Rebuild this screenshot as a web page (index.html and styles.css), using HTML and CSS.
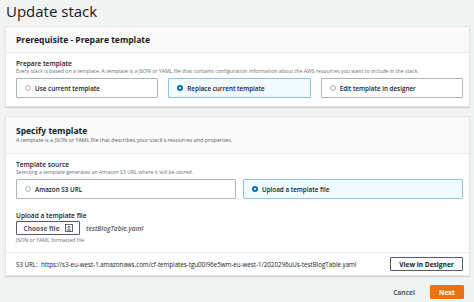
FILE: index.html
```html
<!DOCTYPE html>
<html lang="en">
<head>
    <meta charset="UTF-8">
    <title>Update stack</title>
    <link rel="stylesheet" href="styles.css">
</head>
<body>
    <h1 class="page-title">Update stack</h1>

    <div class="panel">
        <div class="panel-header">
            <h2>Prerequisite - Prepare template</h2>
        </div>
        <div class="panel-body">
            <div class="field-label">Prepare template</div>
            <div class="field-desc">Every stack is based on a template. A template is a JSON or YAML file that contains configuration information about the AWS resources you want to include in the stack.</div>
            <div class="tiles tiles-3">
                <div class="tile"><span class="radio"></span>Use current template</div>
                <div class="tile selected"><span class="radio"></span>Replace current template</div>
                <div class="tile"><span class="radio"></span>Edit template in designer</div>
            </div>
        </div>
    </div>

    <div class="panel">
        <div class="panel-header tall">
            <h2>Specify template</h2>
            <div class="header-desc">A template is a JSON or YAML file that describes your stack's resources and properties.</div>
        </div>
        <div class="panel-body">
            <div class="field-label">Template source</div>
            <div class="field-desc">Selecting a template generates an Amazon S3 URL where it will be stored.</div>
            <div class="tiles tiles-2">
                <div class="tile"><span class="radio"></span>Amazon S3 URL</div>
                <div class="tile selected"><span class="radio"></span>Upload a template file</div>
            </div>

            <div class="field-label upload-label">Upload a template file</div>
            <div class="file-row">
                <button class="btn file-btn">Choose file
                    <svg width="8" height="8" viewBox="0 0 8 8"><rect x="0.5" y="0.5" width="7" height="7" fill="none" stroke="#545b64" stroke-width="0.9"/><path d="M4 6V2M2.4 3.6L4 2l1.6 1.6M2 6.2h4" fill="none" stroke="#545b64" stroke-width="0.9"/></svg>
                </button>
                <span class="file-name">testBlogTable.yaml</span>
            </div>
            <div class="field-desc hint">JSON or YAML formatted file</div>
        </div>
        <div class="url-row">
            <span class="url-text">S3 URL:&nbsp; https://s3-eu-west-1.amazonaws.com/cf-templates-tgu00i96e5wm-eu-west-1/2020296uUs-testBlogTable.yaml</span>
            <button class="btn">View in Designer</button>
        </div>
    </div>

    <div class="actions">
        <button class="link-btn">Cancel</button>
        <button class="btn primary">Next</button>
    </div>
</body>
</html>
```

FILE: styles.css
```css
* {
    margin: 0;
    padding: 0;
    box-sizing: border-box;
}
body {
    font-family: 'Open Sans', 'Liberation Sans', sans-serif;
    background: #f2f3f3;
    color: #16191f;
    padding: 0 4px 0 5px;
    width: 474px;
    height: 302px;
    overflow: hidden;
}
.page-title {
    font-size: 15px;
    font-weight: 400;
    line-height: 22px;
    height: 26px;
    padding-left: 1px;
}
.panel {
    background: #fff;
    border: 1px solid #e4e6e6;
    box-shadow: 0 1px 1px rgba(0, 28, 36, 0.15);
    margin-bottom: 9px;
}
.panel-header {
    background: #fafafa;
    border-bottom: 1px solid #eaeded;
    height: 26px;
    padding: 0 10px;
    display: flex;
    flex-direction: column;
    justify-content: center;
}
.panel-header.tall {
    height: 37px;
}
.panel-header h2 {
    font-size: 8.5px;
    font-weight: 700;
    line-height: 11px;
}
.header-desc {
    font-size: 5.4px;
    line-height: 9px;
    color: #545b64;
}
.panel-body {
    padding: 7px 6px 8px 10px;
}
.field-label {
    font-size: 6.6px;
    line-height: 8px;
    font-weight: 600;
}
.field-desc {
    font-size: 5.2px;
    line-height: 7px;
    color: #687078;
}
.tiles {
    display: grid;
    margin-top: 3px;
}
.tiles-3 {
    grid-template-columns: 1fr 1fr 1fr;
    gap: 10px;
}
.tiles-2 {
    grid-template-columns: 1fr 1fr;
    gap: 7px;
}
.tile {
    height: 20px;
    border: 1px solid #aab7b8;
    border-radius: 1px;
    display: flex;
    align-items: center;
    padding-left: 8px;
    font-size: 6.3px;
    font-weight: 600;
    color: #16191f;
}
.tile.selected {
    background: #f1faff;
    border-color: #8fc3e0;
}
.radio {
    width: 6px;
    height: 6px;
    border-radius: 50%;
    border: 1px solid #aab7b8;
    margin-right: 4px;
    background: #fff;
}
.tile.selected .radio {
    border: 2px solid #0073bb;
}
.upload-label {
    margin-top: 13px;
}
.file-row {
    display: flex;
    align-items: center;
    margin-top: 1px;
}
.btn {
    font-family: inherit;
    background: #fff;
    border: 1px solid #545b64;
    border-radius: 1px;
    color: #545b64;
    font-size: 6.6px;
    font-weight: 700;
    height: 14px;
    padding: 0 4px;
    display: flex;
    align-items: center;
    gap: 5px;
    white-space: nowrap;
}
.file-btn {
    width: 64px;
    justify-content: center;
}
.file-name {
    margin-left: 6px;
    font-size: 6.6px;
    font-style: italic;
    font-weight: 600;
    color: #545b64;
}
.hint {
    margin-top: 2px;
}
.url-row {
    border-top: 1px solid #eaeded;
    display: flex;
    align-items: center;
    justify-content: space-between;
    padding: 4px 6px 4px 10px;
}
.url-text {
    font-size: 6.2px;
    color: #16191f;
}
.url-row .btn {
    width: 73px;
    justify-content: center;
    color: #16191f;
}
.actions {
    display: flex;
    justify-content: flex-end;
    align-items: center;
    gap: 15px;
    padding-right: 6px;
}
.link-btn {
    font-family: inherit;
    background: none;
    border: none;
    color: #545b64;
    font-size: 6.6px;
    font-weight: 700;
}
.btn.primary {
    background: #ec7211;
    border-color: #ec7211;
    color: #fff;
    width: 34px;
    justify-content: center;
}
```
